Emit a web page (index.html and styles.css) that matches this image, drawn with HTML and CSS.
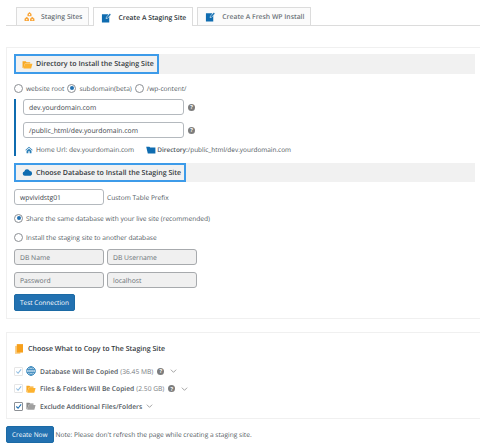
FILE: index.html
```html
<!DOCTYPE html>
<html lang="en">
<head>
    <meta charset="UTF-8">
    <title>Staging</title>
    <link rel="stylesheet" href="styles.css">
</head>
<body>
    <!-- Tabs -->
    <div class="tabs">
        <div class="tab">
            <svg class="tab-icon" viewBox="0 0 12 12"><path fill="#f9a63a" d="M6 1 8.200 3.400V5.600H3.800V3.400ZM3 6.200 5.400 8.400V11H.6V8.400ZM9 6.200 11.400 8.400V11H6.600V8.400Z"/><path fill="#fff" d="M5.400 3.400h1.200v1.200H5.400ZM2.400 8.800h1.200V10H2.400ZM8.400 8.800h1.200V10H8.400Z"/></svg>
            Staging Sites
        </div>
        <div class="tab active">
            <svg class="tab-icon" viewBox="0 0 12 12"><path fill="#0f6cb0" d="M1 2.500h6.500L9 4v7.500H1Z"/><path fill="#0f6cb0" stroke="#fff" stroke-width=".6" d="m6 5.500 3.500-4 1.500 1.300-3.700 4-1.800.4Z"/></svg>
            Create A Staging Site
        </div>
        <div class="tab">
            <svg class="tab-icon" viewBox="0 0 12 12"><path fill="#0f6cb0" d="M1 2.500h6.500L9 4v7.500H1Z"/><path fill="#0f6cb0" stroke="#fff" stroke-width=".6" d="m6 5.500 3.500-4 1.500 1.300-3.700 4-1.800.4Z"/></svg>
            Create A Fresh WP Install
        </div>
    </div>

    <!-- Install options -->
    <div class="panel main-panel">
        <div class="heading-bar">
            <div class="heading-box">
                <svg class="head-icon" viewBox="0 0 12 10"><path fill="#f7a823" d="M.5 1.500h3.500l1 1h4v1.500H3L1.500 9H.5Z"/><path fill="#fdb22f" d="M3 4.200h8.500L10 9.500H1.500Z"/></svg>
                Directory to Install the Staging Site
            </div>
        </div>

        <div class="radio-row">
            <label class="radio-item"><span class="radio"></span>website root</label>
            <label class="radio-item"><span class="radio checked"></span>subdomain(beta)</label>
            <label class="radio-item"><span class="radio"></span>/wp-content/</label>
        </div>

        <div class="dir-fields">
            <div class="field-row">
                <div class="input wide">dev.yourdomain.com</div>
                <span class="help">?</span>
            </div>
            <div class="field-row">
                <div class="input wide">/public_html/dev.yourdomain.com</div>
                <span class="help">?</span>
            </div>
            <div class="path-row">
                <span class="path-item home">
                    <svg class="path-icon" viewBox="0 0 12 12"><path fill="#2b7fb8" d="M6 1 .5 6l.8.8L6 2.700l4.700 4.100.8-.8ZM2.300 7.200 6 4l3.700 3.200V11H7V8H5v3H2.300Z"/></svg>
                    Home Url: dev.yourdomain.com
                </span>
                <span class="path-item dir">
                    <svg class="path-icon folder" viewBox="0 0 12 10"><path fill="#0f6cb0" d="M0 1h4l1 1h6.500v7.500H2Z"/></svg>
                    <span><b>Directory:</b>/public_html/dev.yourdomain.com</span>
                </span>
            </div>
        </div>

        <div class="heading-bar second">
            <div class="heading-box">
                <svg class="head-icon" viewBox="0 0 12 8"><path fill="#0f6cb0" d="M3 7.500a2.400 2.400 0 0 1-.5-4.700 3.200 3.200 0 0 1 6-.5 2.700 2.700 0 0 1 .8 5.200Z"/></svg>
                Choose Database to Install the Staging Site
            </div>
        </div>

        <div class="prefix-row">
            <div class="input short">wpvividstg01</div>
            <span>Custom Table Prefix</span>
        </div>

        <label class="radio-item block first"><span class="radio checked"></span>Share the same database with your live site (recommended)</label>
        <label class="radio-item block"><span class="radio"></span>Install the staging site to another database</label>

        <div class="db-grid">
            <div class="input short disabled">DB Name</div>
            <div class="input short disabled">DB Username</div>
            <div class="input short disabled">Password</div>
            <div class="input short disabled">localhost</div>
        </div>

        <button class="btn test-btn">Test Connection</button>
    </div>

    <!-- Copy options -->
    <div class="panel copy-panel">
        <div class="copy-title">
            <svg class="copy-icon" viewBox="0 0 9 11"><path fill="#fbd08a" d="M0 2h6v9H0Z"/><path fill="#f7a01b" d="M2 0h7v9.500H2Z"/></svg>
            Choose What to Copy to The Staging Site
        </div>
        <div class="copy-row first-row">
            <span class="check faded"><svg viewBox="0 0 8 8"><path fill="none" stroke="#8dbbe0" stroke-width="1.200" d="m1.500 4 2 2 3.500-4.500"/></svg></span>
            <svg class="row-icon" viewBox="0 0 12 12"><circle cx="6" cy="6" r="5.100" fill="none" stroke="#2b7fb8" stroke-width="1.200"/><path fill="none" stroke="#2b7fb8" d="M1 4.300h10M1 7.700h10M6 1v10"/><ellipse cx="6" cy="6" rx="2.500" ry="5" fill="none" stroke="#2b7fb8"/></svg>
            <span class="copy-label">Database Will Be Copied</span>
            <span class="size">(36.45 MB)</span>
            <span class="help">?</span>
            <svg class="chevron" viewBox="0 0 10 6"><path fill="none" stroke="#777" d="m1 1 4 4 4-4"/></svg>
        </div>
        <div class="copy-row">
            <span class="check faded"><svg viewBox="0 0 8 8"><path fill="none" stroke="#8dbbe0" stroke-width="1.200" d="m1.500 4 2 2 3.500-4.500"/></svg></span>
            <svg class="row-icon" viewBox="0 0 12 10"><path fill="#f7a823" d="M.5 1h3.500l1 1h4v1.500H3L1.500 9H.5Z"/><path fill="#fdb22f" d="M3 3.800h8.500L10 9.500H1.500Z"/></svg>
            <span class="copy-label">Files &amp; Folders Will Be Copied</span>
            <span class="size">(2.50 GB)</span>
            <span class="help">?</span>
            <svg class="chevron" viewBox="0 0 10 6"><path fill="none" stroke="#777" d="m1 1 4 4 4-4"/></svg>
        </div>
        <div class="copy-row">
            <span class="check"><svg viewBox="0 0 8 8"><path fill="none" stroke="#2271b1" stroke-width="1.300" d="m1.500 4 2 2 3.500-4.500"/></svg></span>
            <svg class="row-icon" viewBox="0 0 12 10"><path fill="#8c8c8c" d="M.5 1h3.500l1 1h4v1.500H3L1.500 9H.5Z"/><path fill="#a0a0a0" d="M3 3.800h8.500L10 9.500H1.500Z"/></svg>
            <span class="copy-label">Exclude Additional Files/Folders</span>
            <svg class="chevron tight" viewBox="0 0 10 6"><path fill="none" stroke="#777" d="m1 1 4 4 4-4"/></svg>
        </div>
    </div>

    <div class="footer-row">
        <button class="btn">Create Now</button>
        <span>Note: Please don't refresh the page while creating a staging site.</span>
    </div>
</body>
</html>
```

FILE: styles.css
```css
body {
    margin: 0;
    padding: 7px 0 0 6px;
    background: #fff;
    font-family: "Open Sans", sans-serif;
    font-size: 6.6px;
    text-rendering: geometricPrecision;
    color: #50575e;
    overflow: hidden;
    height: 447px;
    box-sizing: border-box;
}

/* Tabs */
.tabs {
    display: flex;
    gap: 4px;
    height: 18px;
    padding-left: 10px;
    border-bottom: 1px solid #dcdcdc;
}

.tab {
    display: flex;
    align-items: center;
    gap: 6px;
    height: 18px;
    padding: 0 6px 0 7px;
    border: 1px solid #dcdcdc;
    border-bottom: 0;
    background: #fbfbfb;
    font-size: 6.8px;
    font-weight: 600;
    color: #6b7278;
    box-sizing: border-box;
}

.tab.active {
    height: 19px;
    background: #fff;
    color: #2c3338;
}

.tab-icon {
    width: 11px;
    height: 11px;
}

/* Panels */
.panel {
    width: 480px;
    border: 1px solid #f0f0f0;
    box-sizing: border-box;
    background: #fff;
}

.main-panel {
    height: 272px;
    margin-top: 21px;
    padding: 6px 0 0 7px;
}

.heading-bar {
    width: 461px;
    height: 20px;
    background: #f1f1f1;
}

.heading-bar.second {
    margin-top: 7px;
    height: 19px;
}

.heading-box {
    display: inline-flex;
    align-items: center;
    gap: 3px;
    height: 100%;
    padding: 0 4px 0 7px;
    border: 1px solid #3d9be9;
    outline: 1px solid #3d9be9;
    outline-offset: -2px;
    box-sizing: border-box;
    font-size: 7.05px;
    font-weight: 600;
    color: #32373c;
}

.head-icon {
    width: 11px;
    height: 9px;
}

/* Radios */
.radio-row {
    display: flex;
    gap: 3px;
    margin-top: 8px;
    height: 12px;
    align-items: center;
}

.radio-item {
    display: flex;
    align-items: center;
    gap: 3px;
}

.radio-item.block {
    height: 12px;
    margin-top: 7px;
}

.radio-item.first {
    margin-top: 7px;
}

.radio {
    width: 9px;
    height: 9px;
    border: 1px solid #8c8f94;
    border-radius: 50%;
    background: #fff;
    position: relative;
    box-sizing: border-box;
}

.radio.checked::after {
    content: "";
    position: absolute;
    inset: 1.5px;
    border-radius: 50%;
    background: #2271b1;
}

/* Inputs */
.dir-fields {
    margin-top: 5px;
    padding-left: 7px;
    height: 57px;
    border-left: 2px solid #0f6cb0;
}

.field-row {
    display: flex;
    align-items: center;
    gap: 4px;
    margin-bottom: 7px;
}

.input {
    display: flex;
    align-items: center;
    height: 16px;
    padding-left: 5px;
    border: 1px solid #b4b9be;
    border-radius: 3px;
    background: #fff;
    box-sizing: border-box;
    font-size: 6.8px;
    color: #3c434a;
}

.input.wide {
    width: 161px;
}

.input.short {
    width: 90px;
}

.input.disabled {
    background: #f0f0f0;
    border-color: #a7aaad;
    color: #6b7278;
}

.help {
    display: inline-flex;
    align-items: center;
    justify-content: center;
    width: 7px;
    height: 7px;
    border-radius: 50%;
    background: #7d7d7d;
    color: #fff;
    font-size: 5.5px;
    font-weight: 700;
}

.path-row {
    display: flex;
    gap: 12px;
    margin-top: 7px;
    padding-left: 2px;
}

.path-item {
    display: flex;
    align-items: center;
    gap: 3px;
}

.path-item.dir {
    gap: 1px;
    font-size: 6.45px;
}

.path-item b {
    font-weight: 600;
}

.path-icon {
    width: 8px;
    height: 8px;
}

.path-icon.folder {
    width: 10px;
}

.prefix-row {
    display: flex;
    align-items: center;
    gap: 3px;
    margin-top: 7px;
}

.db-grid {
    display: grid;
    grid-template-columns: 90px 90px;
    gap: 7px 3px;
    margin-top: 6px;
}

/* Buttons */
.btn {
    height: 17px;
    padding: 0 5px;
    border: 1px solid #1b6aa5;
    border-radius: 2px;
    background: #2271b1;
    color: #fff;
    font-family: inherit;
    font-size: 6.5px;
    text-rendering: inherit;
}

.test-btn {
    display: block;
    margin-top: 6px;
}

/* Copy section */
.copy-panel {
    height: 87px;
    margin-top: 13px;
    padding: 11px 0 0 7px;
}

.copy-title {
    display: flex;
    align-items: center;
    gap: 5px;
    padding-left: 1px;
    font-size: 7.05px;
    font-weight: 600;
    color: #32373c;
}

.copy-icon {
    width: 8px;
    height: 10px;
}

.copy-row {
    display: flex;
    align-items: center;
    gap: 4px;
    height: 12px;
    margin-top: 5.5px;
    font-size: 6.7px;
    font-weight: 600;
}

.copy-row.first-row {
    margin-top: 11px;
}

.check {
    display: inline-flex;
    width: 9px;
    height: 9px;
    margin-right: -1px;
    border: 1px solid #8c8f94;
    border-radius: 1px;
    box-sizing: border-box;
}

.check.faded {
    border-color: #e6e6e6;
}

.row-icon {
    width: 10px;
    height: 10px;
}

.size {
    font-weight: 400;
    margin-left: -2px;
    color: #787c82;
}

.chevron {
    width: 7px;
    height: 4px;
    margin-left: 2px;
}

.chevron.tight {
    margin-left: 0;
}

.footer-row {
    display: flex;
    align-items: center;
    gap: 2px;
    margin-top: 7px;
}
```
